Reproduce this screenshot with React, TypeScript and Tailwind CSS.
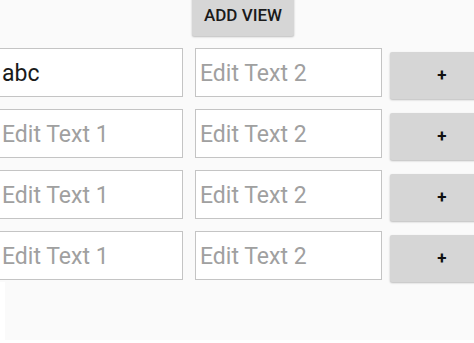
import { useState } from 'react';

interface Row {
  id: number;
  first: string;
  second: string;
}

export default function App() {
  const [rows, setRows] = useState<Row[]>([
    { id: 1, first: 'abc', second: '' },
    { id: 2, first: '', second: '' },
    { id: 3, first: '', second: '' },
    { id: 4, first: '', second: '' },
  ]);

  function addRow() {
    setRows(prev => [...prev, { id: Date.now(), first: '', second: '' }]);
  }

  function update(id: number, key: 'first' | 'second', value: string) {
    setRows(prev => prev.map(r => (r.id === id ? { ...r, [key]: value } : r)));
  }

  return (
    <div
      className="h-screen w-full overflow-hidden bg-[#fafafa] flex flex-col border-b-[3px] border-white"
      style={{ fontFamily: 'Roboto, "Liberation Sans", sans-serif' }}
    >
      <button
        onClick={addRow}
        className="ml-[192px] mt-[-8px] w-[102px] h-[44px] shrink-0 bg-[#d6d6d6] rounded-[2px] shadow-[0_1px_2px_rgba(0,0,0,0.25)] text-[17px] font-medium text-[#1a1a1a] flex items-center justify-center pt-[4px]"
      >
        ADD VIEW
      </button>

      <div className="mt-[12px] flex flex-col gap-[12px]">
        {rows.map(row => (
          <div key={row.id} className="flex items-start h-[49px] shrink-0">
            <input
              value={row.first}
              onChange={e => update(row.id, 'first', e.target.value)}
              placeholder="Edit Text 1"
              className="ml-[-3px] w-[186px] h-[49px] shrink-0 border border-[#c4c4c4] bg-white pl-[4px] pt-[1px] text-[23px] text-[#1a1a1a] placeholder:text-[#a0a0a0] outline-none"
            />
            <input
              value={row.second}
              onChange={e => update(row.id, 'second', e.target.value)}
              placeholder="Edit Text 2"
              className="ml-[12px] w-[187px] h-[49px] shrink-0 border border-[#c4c4c4] bg-white pl-[4px] pt-[1px] text-[23px] text-[#1a1a1a] placeholder:text-[#a0a0a0] outline-none"
            />
            <button className="ml-[8px] mt-[4px] w-[104px] h-[47px] shrink-0 bg-[#d6d6d6] rounded-[2px] shadow-[0_1px_2px_rgba(0,0,0,0.25)] text-[17px] font-bold text-[#111]">
              +
            </button>
          </div>
        ))}
      </div>

      <div className="flex-1 mt-[2px] border-l-[5px] border-white" />
    </div>
  );
}
